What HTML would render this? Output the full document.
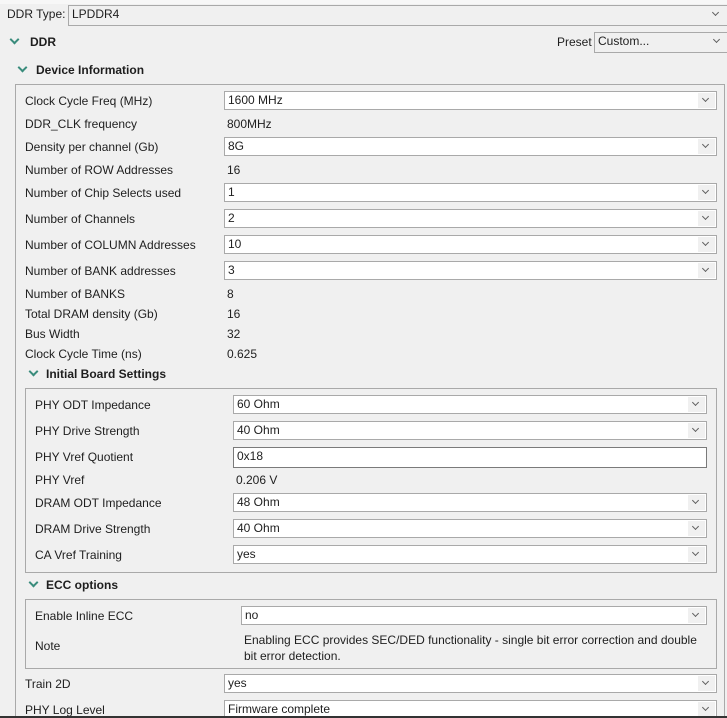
<!DOCTYPE html>
<html style="overflow:hidden;height:718px"><head><meta charset="utf-8"><style>
body{margin:0;width:727px;height:718px;background:#f0f0f0;position:relative;overflow:hidden;font-family:"Liberation Sans","DejaVu Sans",sans-serif;font-size:12px;color:#1e1e1e}
.a{position:absolute;white-space:nowrap}
.l{position:absolute;line-height:14px}
.c{position:absolute;height:19px;background:#fff;border:1px solid #a9a9a9;box-sizing:border-box;padding-left:3px;line-height:17px}
.c i{position:absolute;right:1px;top:1px;width:17px;height:15px;background:#f0f0f0}
.c i:after{content:"";position:absolute;left:5px;top:3px;width:4px;height:4px;border-right:1.5px solid #606060;border-bottom:1.5px solid #606060;transform:rotate(45deg)}
.h{position:absolute;font-weight:bold;line-height:14px}
.v{position:absolute;width:5px;height:5px;border-right:2.5px solid #3a8c7c;border-bottom:2.5px solid #3a8c7c;transform:rotate(45deg)}
.box{position:absolute;border:1px solid #a9a9a9;box-sizing:border-box}
</style></head><body>
<div class="a" style="left:0;top:0;width:727px;height:4px;background:#f7f7f7"></div>
<div class="l" style="left:7px;top:7px">DDR Type:</div>
<div class="c" style="left:68px;top:5px;width:670px;height:21px;background:#f0f0f0"><span>LPDDR4</span><i style="right:12px"></i></div>

<div class="v" style="left:11px;top:36px"></div><div class="h" style="left:30px;top:35px">DDR</div>
<div class="l" style="left:557px;top:35px">Preset</div>
<div class="c" style="left:594px;top:32px;width:145px;height:21px;background:#f0f0f0">Custom...<i style="right:12px"></i></div>

<div class="v" style="left:19px;top:64px"></div><div class="h" style="left:36px;top:63px">Device Information</div>
<div class="box" style="left:15px;top:84px;width:710px;height:640px"></div>

<div class="l" style="left:25px;top:94px">Clock Cycle Freq (MHz)</div><div class="c" style="left:224px;top:91px;width:493px">1600 MHz<i></i></div>
<div class="l" style="left:25px;top:117px">DDR_CLK frequency</div><div class="l" style="left:227px;top:117px">800MHz</div>
<div class="l" style="left:25px;top:140px">Density per channel (Gb)</div><div class="c" style="left:224px;top:137px;width:493px">8G<i></i></div>
<div class="l" style="left:25px;top:163px">Number of ROW Addresses</div><div class="l" style="left:227px;top:163px">16</div>
<div class="l" style="left:25px;top:186px">Number of Chip Selects used</div><div class="c" style="left:224px;top:183px;width:493px">1<i></i></div>
<div class="l" style="left:25px;top:212px">Number of Channels</div><div class="c" style="left:224px;top:209px;width:493px">2<i></i></div>
<div class="l" style="left:25px;top:238px">Number of COLUMN Addresses</div><div class="c" style="left:224px;top:235px;width:493px">10<i></i></div>
<div class="l" style="left:25px;top:264px">Number of BANK addresses</div><div class="c" style="left:224px;top:261px;width:493px">3<i></i></div>
<div class="l" style="left:25px;top:287px">Number of BANKS</div><div class="l" style="left:227px;top:287px">8</div>
<div class="l" style="left:25px;top:307px">Total DRAM density (Gb)</div><div class="l" style="left:227px;top:307px">16</div>
<div class="l" style="left:25px;top:327px">Bus Width</div><div class="l" style="left:227px;top:327px">32</div>
<div class="l" style="left:25px;top:347px">Clock Cycle Time (ns)</div><div class="l" style="left:227px;top:347px">0.625</div>

<div class="v" style="left:30px;top:368px"></div><div class="h" style="left:46px;top:367px">Initial Board Settings</div>
<div class="box" style="left:25px;top:388px;width:692px;height:185px"></div>
<div class="l" style="left:35px;top:398px">PHY ODT Impedance</div><div class="c" style="left:233px;top:395px;width:474px">60 Ohm<i></i></div>
<div class="l" style="left:35px;top:424px">PHY Drive Strength</div><div class="c" style="left:233px;top:421px;width:474px">40 Ohm<i></i></div>
<div class="l" style="left:35px;top:450px">PHY Vref Quotient</div><div class="c" style="left:233px;top:447px;width:474px;height:21px;border-color:#7a7a7a">0x18</div>
<div class="l" style="left:35px;top:473px">PHY Vref</div><div class="l" style="left:236px;top:473px">0.206 V</div>
<div class="l" style="left:35px;top:496px">DRAM ODT Impedance</div><div class="c" style="left:233px;top:493px;width:474px">48 Ohm<i></i></div>
<div class="l" style="left:35px;top:522px">DRAM Drive Strength</div><div class="c" style="left:233px;top:519px;width:474px">40 Ohm<i></i></div>
<div class="l" style="left:35px;top:548px">CA Vref Training</div><div class="c" style="left:233px;top:545px;width:474px">yes<i></i></div>

<div class="v" style="left:30px;top:579px"></div><div class="h" style="left:46px;top:578px">ECC options</div>
<div class="box" style="left:25px;top:599px;width:692px;height:70px"></div>
<div class="l" style="left:35px;top:609px">Enable Inline ECC</div><div class="c" style="left:241px;top:606px;width:466px">no<i></i></div>
<div class="l" style="left:35px;top:639px">Note</div>
<div class="l" style="left:244px;top:632px;line-height:16px">Enabling ECC provides SEC/DED functionality - single bit error correction and double<br>bit error detection.</div>

<div class="l" style="left:25px;top:677px">Train 2D</div><div class="c" style="left:224px;top:674px;width:493px">yes<i></i></div>
<div class="l" style="left:25px;top:703px">PHY Log Level</div><div class="c" style="left:224px;top:700px;width:493px">Firmware complete<i></i></div>
<div class="a" style="left:0;top:716px;width:727px;height:2px;background:#333"></div>
</body></html>
